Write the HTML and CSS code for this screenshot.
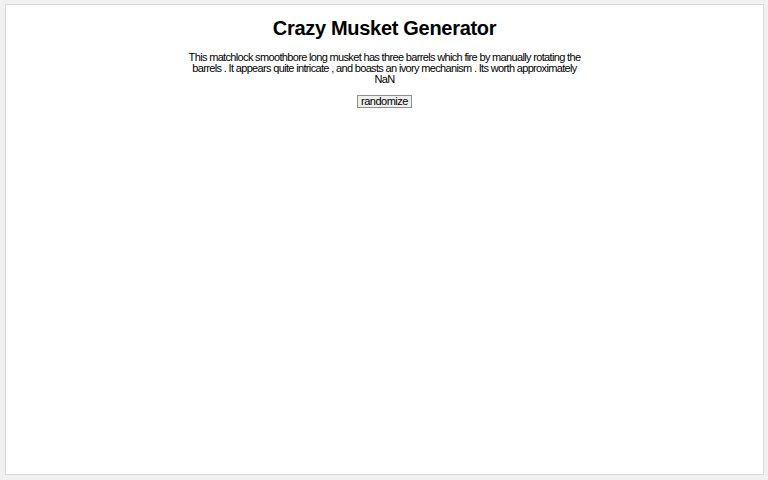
FILE: index.html
```html
<!DOCTYPE html>
<html>
<head>
<meta charset="utf-8">
<title>Crazy Musket Generator</title>
<link rel="stylesheet" href="styles.css">
</head>
<body>
<main class="panel">
  <h1 class="title">Crazy Musket Generator</h1>
  <p class="desc">This matchlock smoothbore long musket has three barrels which fire by manually rotating the barrels . It appears quite intricate , and boasts an ivory mechanism . Its worth approximately NaN</p>
  <button class="btn" type="button">randomize</button>
</main>
</body>
</html>
```
FILE: styles.css
```css
html, body {
  margin: 0;
  height: 100%;
}
body {
  background: #f1f1f1;
  font-family: "Liberation Sans", Arial, sans-serif;
  padding: 4px 4px 5px 5px;
  box-sizing: border-box;
}
.panel {
  height: 100%;
  box-sizing: border-box;
  background: #fff;
  border: 1px solid #d8d8d8;
  display: flex;
  flex-direction: column;
  align-items: center;
  padding-top: 12px;
}
.title {
  margin: 0;
  font-size: 20px;
  font-weight: bold;
  letter-spacing: -0.3px;
  color: #000;
  line-height: 23px;
}
.desc {
  margin: 12px 0 0;
  width: 400px;
  text-align: center;
  font-size: 11px;
  line-height: 11px;
  letter-spacing: -0.66px;
  color: #000;
}
.btn {
  margin-top: 10px;
  font-family: "Liberation Sans", Arial, sans-serif;
  font-size: 11px;
  line-height: 11px;
  letter-spacing: -0.5px;
  padding: 0 3px;
  background: #efefef;
  border: 1px solid #8f8f8f;
  border-radius: 0;
  color: #000;
}
```
